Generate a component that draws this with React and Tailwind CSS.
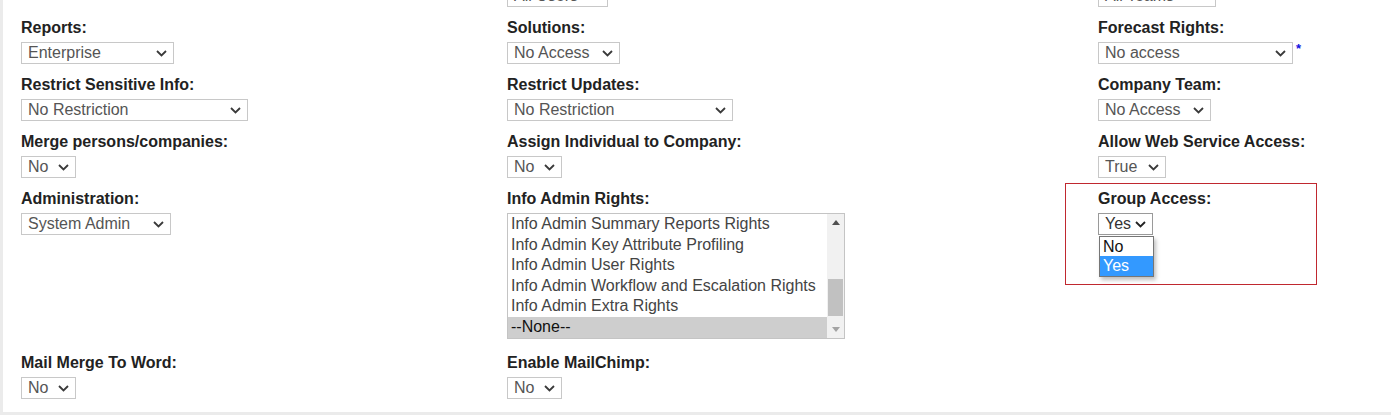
import React from 'react'

const FONT = { fontFamily: '"Liberation Sans", Arial, sans-serif' }

function Chevron({ dark }) {
  return (
    <svg width="11" height="7" viewBox="0 0 11 7" className="shrink-0">
      <path d="M1 1 L5.5 5.5 L10 1" fill="none" stroke={dark ? '#222' : '#3a3a3a'} strokeWidth="1.8" />
    </svg>
  )
}

function Select({ value, w, open }) {
  return (
    <div
      className={`flex h-[22px] items-center justify-between border bg-white pl-[6px] pr-[6px] text-[16px] leading-none ${
        open ? 'border-[#9a9a9a] text-[#333]' : 'border-[#c8c8c8] text-[#555]'
      }`}
      style={{ width: w }}
    >
      <span className="whitespace-nowrap">{value}</span>
      <Chevron dark={open} />
    </div>
  )
}

function Field({ label, children, last }) {
  return (
    <div className={last ? 'pb-[13px]' : 'pb-[10px]'}>
      <div className="h-[20px] whitespace-nowrap pt-[1px] text-[16px] font-bold leading-[20px] text-[#222]">{label}</div>
      <div className="mt-[5px]">{children}</div>
    </div>
  )
}

const rights = [
  'Info Admin Summary Reports Rights',
  'Info Admin Key Attribute Profiling',
  'Info Admin User Rights',
  'Info Admin Workflow and Escalation Rights',
  'Info Admin Extra Rights',
  '--None--',
]

function ListBox() {
  return (
    <div className="flex h-[126px] w-[338px] border border-[#c4c4c4] bg-white">
      <div className="flex-1">
        {rights.map((r, i) => (
          <div
            key={r}
            className={`h-[20.6px] whitespace-nowrap pl-[3px] text-[16px] leading-[20.6px] ${
              i === rights.length - 1 ? 'bg-[#cecece] text-[#111]' : 'text-[#444]'
            }`}
          >
            {r}
          </div>
        ))}
      </div>
      <div className="flex w-[17px] flex-col bg-[#f1f1f1]">
        <div className="flex h-[17px] items-center justify-center">
          <svg width="8" height="5" viewBox="0 0 8 5"><path d="M0 5 L4 0 L8 5 Z" fill="#505050" /></svg>
        </div>
        <div className="flex-1 pt-[48px] pb-[4px]">
          <div className="mx-[1px] h-[37px] bg-[#c1c1c1]" />
        </div>
        <div className="flex h-[17px] items-center justify-center">
          <svg width="8" height="5" viewBox="0 0 8 5"><path d="M0 0 L8 0 L4 5 Z" fill="#a3a3a3" /></svg>
        </div>
      </div>
    </div>
  )
}

function GroupAccess() {
  return (
    <div className="relative">
      <div className="pointer-events-none absolute -left-[33px] -top-[5px] h-[102px] w-[252px] border border-[#c0282f]" />
      <Field label="Group Access:">
        <div className="relative">
          <Select value="Yes" w={55} open />
          <div className="absolute left-[1px] top-[23px] w-[55px] border border-[#767676] bg-white text-[16px] leading-[20px] shadow-[2px_3px_4px_rgba(0,0,0,0.25)]">
            <div className="h-[19px] pl-[3px] leading-[19px] text-[#111]">No</div>
            <div className="h-[20px] bg-[#3399ff] pl-[3px] leading-[20px] text-white">Yes</div>
          </div>
        </div>
      </Field>
    </div>
  )
}

export default function App() {
  return (
    <div className="h-[415px] overflow-hidden border-b-[3px] border-l-[3px] border-[#ebebeb] bg-white" style={FONT}>
      <div className="-mt-[40px] grid grid-cols-[486px_591px_1fr] pl-[18px]">
        {/* row 0 (mostly scrolled off) */}
        <div />
        <Field label="Users:"><Select value="All Users" w={101} /></Field>
        <Field label="Teams:"><Select value="All Teams" w={118} /></Field>

        <Field label="Reports:"><Select value="Enterprise" w={153} /></Field>
        <Field label="Solutions:"><Select value="No Access" w={113} /></Field>
        <Field label="Forecast Rights:">
          <div className="flex items-start">
            <Select value="No access" w={195} />
            <span className="ml-[3px] text-[13px] leading-[14px] font-bold text-[#1010e0]">*</span>
          </div>
        </Field>

        <Field label="Restrict Sensitive Info:"><Select value="No Restriction" w={227} /></Field>
        <Field label="Restrict Updates:"><Select value="No Restriction" w={226} /></Field>
        <Field label="Company Team:"><Select value="No Access" w={113} /></Field>

        <Field label="Merge persons/companies:"><Select value="No" w={55} /></Field>
        <Field label="Assign Individual to Company:"><Select value="No" w={55} /></Field>
        <Field label="Allow Web Service Access:"><Select value="True" w={68} /></Field>

        <Field label="Administration:" last><Select value="System Admin" w={150} /></Field>
        <Field label="Info Admin Rights:" last><ListBox /></Field>
        <GroupAccess />

        <Field label="Mail Merge To Word:"><Select value="No" w={55} /></Field>
        <Field label="Enable MailChimp:"><Select value="No" w={55} /></Field>
        <div />
      </div>
    </div>
  )
}
